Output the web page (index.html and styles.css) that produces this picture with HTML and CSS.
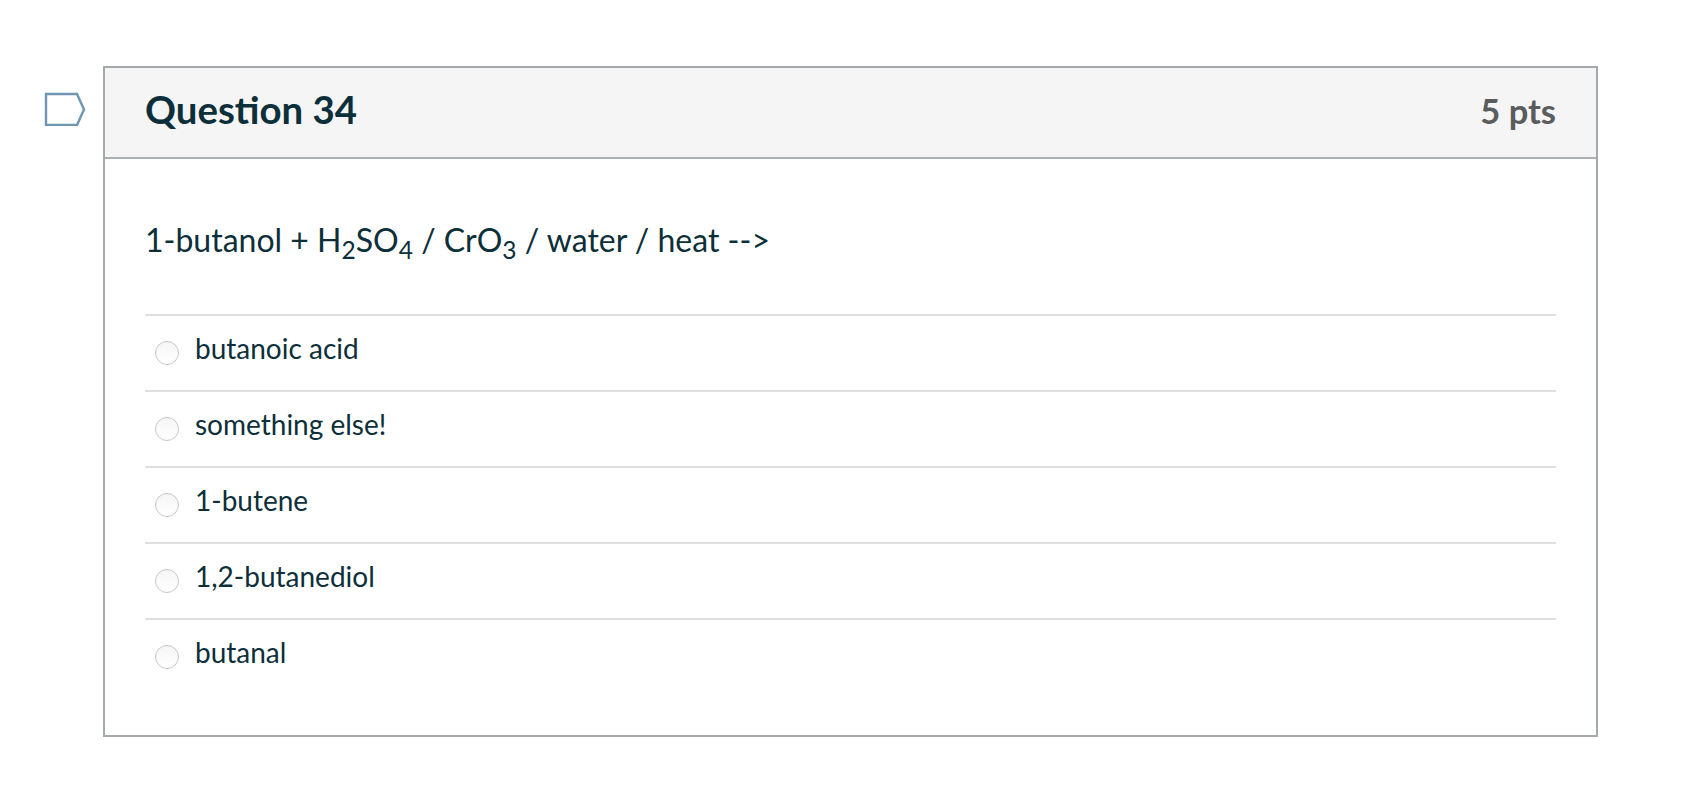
FILE: index.html
```html
<!DOCTYPE html>
<html lang="en">
<head>
<meta charset="utf-8">
<title>Question 34</title>
<link rel="stylesheet" href="styles.css">
</head>
<body>
<div class="quiz">
  <svg class="flag" width="42" height="34" viewBox="0 0 42 34" aria-hidden="true">
    <path d="M2 2H33L40 17.5L33 33H2Z" fill="none" stroke="#7095b0" stroke-width="2.4"/>
  </svg>
  <section class="card">
    <header class="head">
      <h2 class="title">Question 34</h2>
      <span class="pts">5 pts</span>
    </header>
    <div class="body">
      <p class="text">1-butanol + H<sub>2</sub>SO<sub>4</sub> / CrO<sub>3</sub> / water / heat --&gt;</p>
      <ul class="answers">
        <li class="answer"><span class="radio"></span><span class="label">butanoic acid</span></li>
        <li class="answer"><span class="radio"></span><span class="label">something else!</span></li>
        <li class="answer"><span class="radio"></span><span class="label">1-butene</span></li>
        <li class="answer"><span class="radio"></span><span class="label">1,2-butanediol</span></li>
        <li class="answer"><span class="radio"></span><span class="label">butanal</span></li>
      </ul>
    </div>
  </section>
</div>
</body>
</html>
```
FILE: styles.css
```css
html, body { margin: 0; padding: 0; background: #fff; }
body { font-family: Lato, "Liberation Sans", sans-serif; color: #0c2f3a; }
.quiz { position: relative; width: 1495px; margin: 66px 0 0 103px; }
.flag { position: absolute; left: -59px; top: 26px; }
.card { border: 2px solid #a5a9ab; height: 671px; box-sizing: border-box; }
.head { display: flex; justify-content: space-between; align-items: center; height: 91px; padding: 0 40px 8px; box-sizing: border-box; background: #f5f5f5; border-bottom: 2px solid #adb0b2; }
.title { margin: 0; font-size: 38.4px; font-weight: 700; }
.pts { font-size: 34.5px; font-weight: 700; color: #5a5c5e; margin-top: 4px; }
.body { padding: 0 40px; }
.text { margin: 0; padding-top: 62px; height: 155px; box-sizing: border-box; font-size: 32px; line-height: 38px; }
.text sub { font-size: 24.5px; line-height: 0; }
.answers { list-style: none; margin: 0; padding: 0; }
.answer { display: flex; align-items: center; height: 76px; box-sizing: border-box; border-top: 2px solid #dedfe0; padding-left: 10px; }
.radio { width: 24px; height: 24px; box-sizing: border-box; border: 1px solid #c4c7c8; border-radius: 50%; background: linear-gradient(#f6f6f6, #fff); margin-top: 0; }
.label { margin-left: 16px; font-size: 28px; margin-top: -10px; }
```
